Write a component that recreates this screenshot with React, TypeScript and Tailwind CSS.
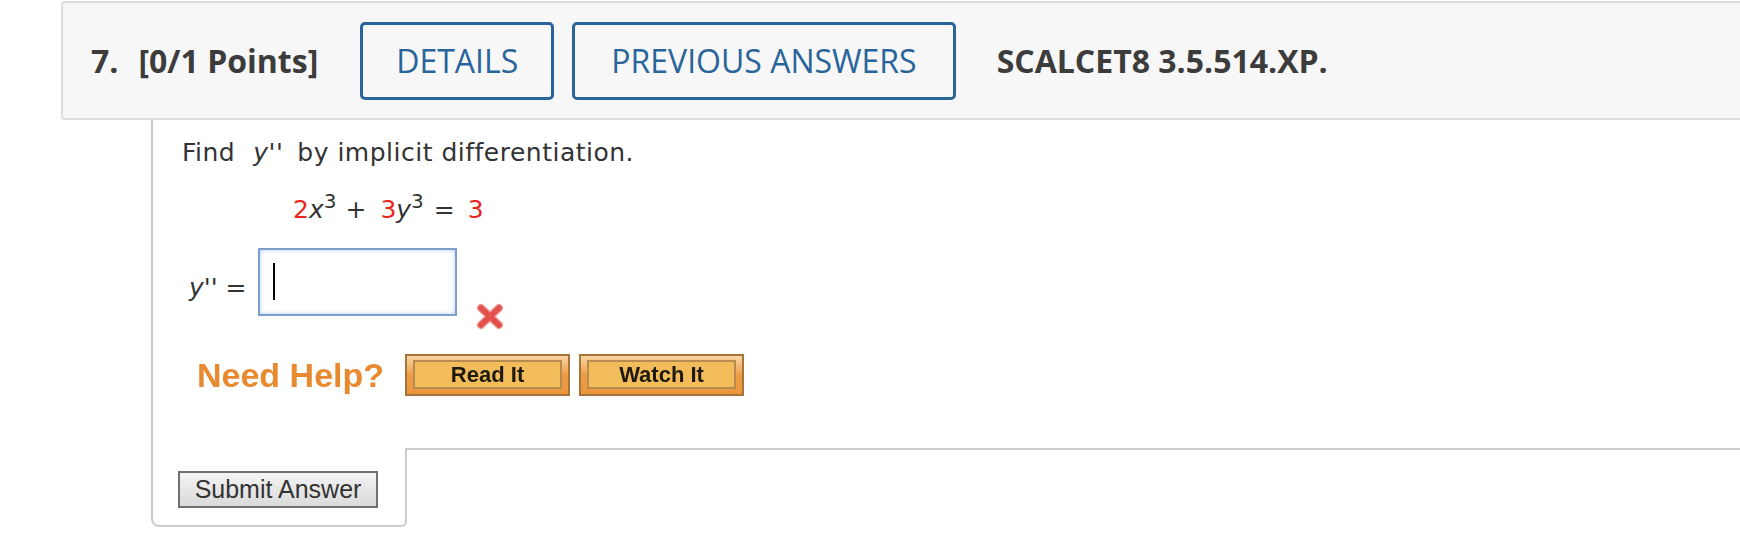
import React from "react";

export default function App() {
  return (
    <div className="w-full h-[536px] bg-white overflow-hidden">
      {/* question header */}
      <div className="ml-[61px] mt-px h-[119px] border-2 border-r-0 border-[#dcdcdc] rounded-l-[4px] bg-[#f7f7f7] flex items-center pl-[28px] font-['Open_Sans',sans-serif] text-[#3c3c3c] whitespace-nowrap">
        <span className="text-[32px] font-bold">7.</span>
        <span className="ml-[20px] text-[32px] font-bold">[0/1 Points]</span>
        <HeaderButton label="DETAILS" className="ml-[42px] px-[33px]" />
        <HeaderButton label="PREVIOUS ANSWERS" className="ml-[18px] px-[36px]" />
        <span className="ml-[41px] text-[32px] font-bold">SCALCET8 3.5.514.XP.</span>
      </div>

      {/* question body */}
      <div className="ml-[151px] flex flex-col font-['DejaVu_Sans',Verdana,sans-serif] text-[#333333]">
        <div className="h-[328px] border-l-2 border-[#cccccc] pl-[29px] pt-[18px]">
          <p className="text-[25px] leading-[30px] tracking-[0.5px] whitespace-nowrap">
            Find
            <span className="inline-block ml-[18px] mr-[14px] italic">y''</span>
            by implicit differentiation.
          </p>

          <div className="ml-[111px] mt-[27px] flex items-baseline text-[25px] leading-[30px] whitespace-nowrap">
            <span className="text-[#e8261d]">2</span>
            <span className="italic">x</span>
            <sup className="text-[20px] top-[-10px]">3</sup>
            <span className="ml-[9px]">+</span>
            <span className="ml-[14px] text-[#e8261d]">3</span>
            <span className="italic">y</span>
            <sup className="text-[20px] top-[-10px]">3</sup>
            <span className="ml-[10px]">=</span>
            <span className="ml-[13px] text-[#e8261d]">3</span>
          </div>

          <div className="mt-[23px] ml-[7px] flex items-start">
            <span className="w-[69px] mt-[25px] text-[25px] leading-[30px] whitespace-nowrap">
              <span className="italic">y''</span> =
            </span>
            <div className="w-[199px] h-[68px] border-2 border-[#7fa0cc] bg-white shadow-[inset_0_0_4px_rgba(110,160,225,0.55)] pl-[13px] pt-[13px]">
              <span className="block w-[2px] h-[37px] bg-black" />
            </div>
            <WrongMark />
          </div>

          <div className="mt-[24px] ml-[15px] flex items-center h-[42px]">
            <span className="font-['Liberation_Sans',Arial,sans-serif] font-bold text-[34px] text-[#e98a30] blur-[0.4px] whitespace-nowrap">
              Need Help?
            </span>
            <HelpButton label="Read It" className="ml-[21px]" />
            <HelpButton label="Watch It" className="ml-[9px]" />
          </div>
        </div>

        <div className="flex">
          <div className="w-[256px] h-[79px] border-2 border-t-0 border-[#cccccc] rounded-bl-[8px] rounded-br-[6px] pl-[25px] pt-[23px]">
            <button className="h-[37px] w-[200px] border-2 border-[#707070] bg-gradient-to-b from-[#f4f4f4] to-[#dadada] font-['Liberation_Sans',Arial,sans-serif] text-[25px] leading-none text-[#333333]">
              Submit Answer
            </button>
          </div>
          <div className="flex-1 border-t-2 border-[#cccccc]" />
        </div>
      </div>
    </div>
  );
}

function HeaderButton({ label, className }: { label: string; className?: string }) {
  return (
    <div
      className={`h-[78px] border-[3px] border-[#29649a] rounded-[5px] flex items-center text-[32px] font-medium text-[#29649a] ${className ?? ""}`}
    >
      {label}
    </div>
  );
}

function HelpButton({ label, className }: { label: string; className?: string }) {
  return (
    <div
      className={`w-[165px] h-[42px] border-2 border-[#a9743a] bg-gradient-to-b from-[#f8d6a4] via-[#ee9d44] to-[#ea963c] pt-[4px] px-[6px] pb-[5px] flex ${className ?? ""}`}
    >
      <div className="flex-1 border-2 border-[#b88b50] bg-[#f2bc5a] flex items-center justify-center font-['Liberation_Sans',Arial,sans-serif] font-bold text-[22px] leading-none text-[#1e1a10] blur-[0.3px]">
        {label}
      </div>
    </div>
  );
}

function WrongMark() {
  return (
    <svg className="ml-[19px] mt-[55px]" width="28" height="27" viewBox="0 0 28 27">
      <g strokeLinecap="round">
        <path d="M5 5 L23 22 M23 5 L5 22" stroke="#f09a96" strokeWidth="8" />
        <path d="M5 5 L23 22 M23 5 L5 22" stroke="#e2504b" strokeWidth="5.5" />
      </g>
    </svg>
  );
}
